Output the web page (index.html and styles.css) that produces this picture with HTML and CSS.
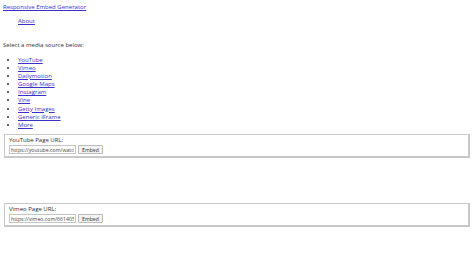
FILE: index.html
```html
<!DOCTYPE html>
<html>
<head>
<meta charset="utf-8">
<link rel="stylesheet" href="styles.css">
</head>
<body>
<header class="top">
  <a href="#">Responsive Embed Generator</a>
  <ul class="nav"><li><a href="#">About</a></li></ul>
</header>
<p class="intro">Select a media source below:</p>
<ul class="sources">
  <li><a href="#">YouTube</a></li>
  <li><a href="#">Vimeo</a></li>
  <li><a href="#">Dailymotion</a></li>
  <li><a href="#">Google Maps</a></li>
  <li><a href="#">Instagram</a></li>
  <li><a href="#">Vine</a></li>
  <li><a href="#">Getty Images</a></li>
  <li><a href="#">Generic iFrame</a></li>
  <li><a href="#">More</a></li>
</ul>
<fieldset class="box">
  <div class="lbl">YouTube Page URL:</div>
  <div class="row"><input class="url" type="text" value="https://youtube.com/watch?v=abc"><button class="btn">Embed</button></div>
</fieldset>
<div class="spacer"></div>
<fieldset class="box">
  <div class="lbl">Vimeo Page URL:</div>
  <div class="row"><input class="url" type="text" value="https://vimeo.com/66140585"><button class="btn">Embed</button></div>
</fieldset>
</body>
</html>
```
FILE: styles.css
```css
html, body { margin: 0; padding: 0; background: #fff; }
body {
  font-family: "Open Sans", sans-serif;
  font-size: 6px;
  line-height: 8.2px;
  color: #2e2e2e;
  padding: 3px;
}
a { color: #3a32c8; text-decoration: underline; }
.top { margin: 0; }
.nav { list-style: none; margin: 6px 0 0 0; padding: 0 0 0 15px; }
.intro { margin: 16px 0 6px 0; }
.sources { margin: 0; padding: 0 0 0 15px; }
.sources li { line-height: 8.15px; }
.box {
  margin: 5px 1px 0 1px;
  padding: 1px 4px 2px 4px;
  border: 1px solid #c8c8c8;
  border-width: 1px 2px 2px 1px;
  min-width: 0;
}
.lbl { line-height: 9px; }
.row { display: flex; gap: 2px; align-items: center; }
.url {
  font-family: "Open Sans", sans-serif;
  font-size: 5.2px;
  width: 67px;
  height: 9px;
  padding: 0 1px;
  margin: 0;
  border: 1px solid #c4c4c4;
  box-sizing: border-box;
  color: #444;
}
.btn {
  font-family: "Open Sans", sans-serif;
  font-size: 5.2px;
  height: 9px;
  padding: 0 3px;
  margin: 0;
  border: 1px solid #bbb;
  background: #f2f2f2;
  border-radius: 1px;
  line-height: 6px;
  color: #333;
}
.spacer { height: 40px; }
```
